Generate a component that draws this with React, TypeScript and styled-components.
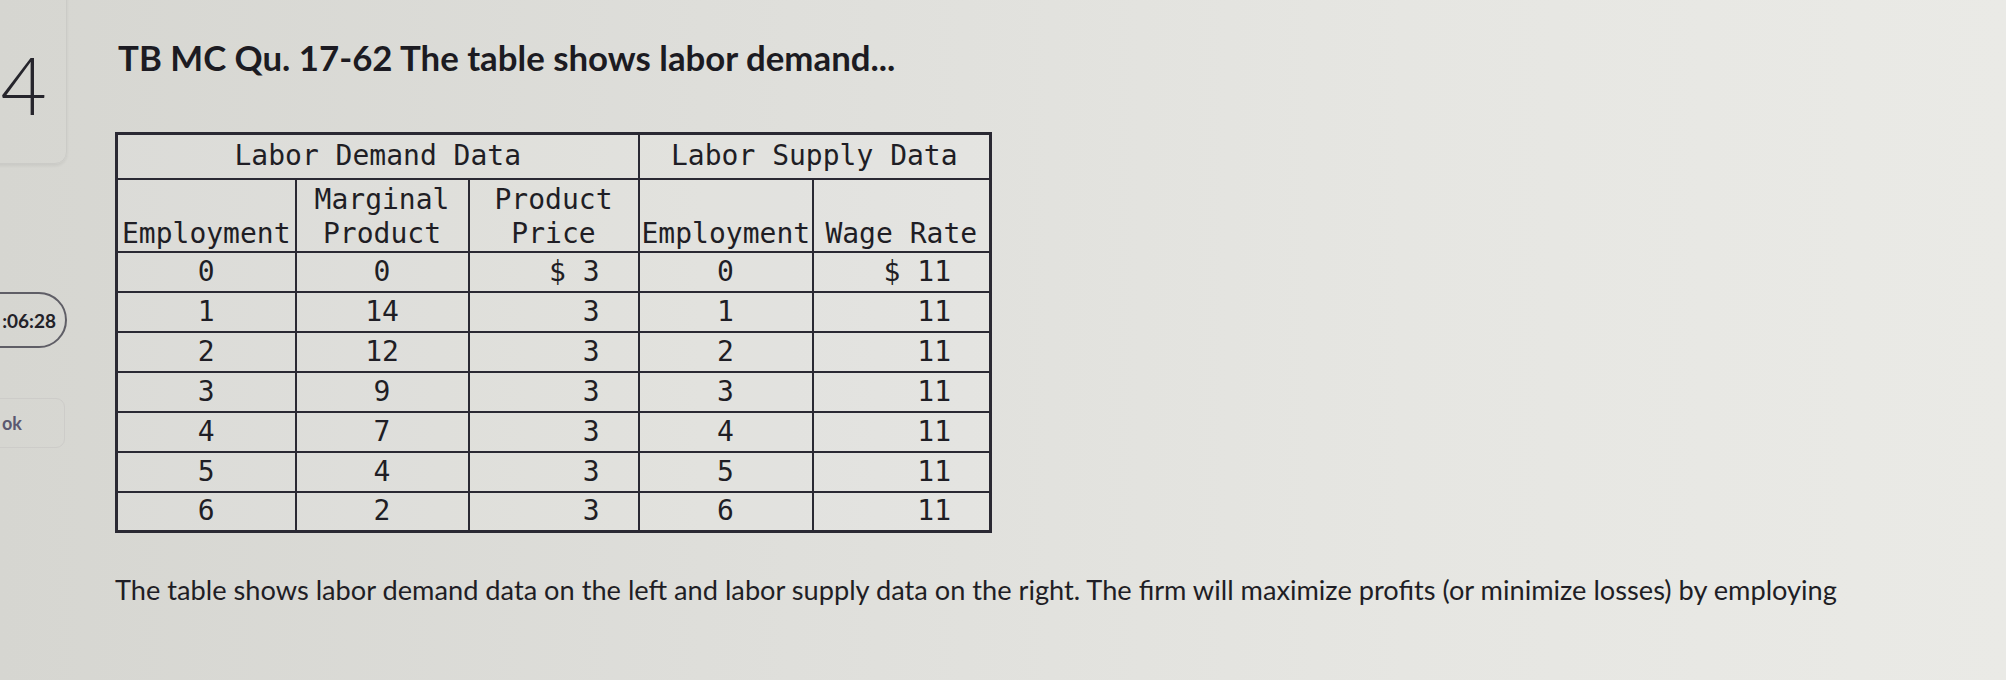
import React from "react";
import styled, { createGlobalStyle } from "styled-components";

const Global = createGlobalStyle`
  html, body { margin: 0; padding: 0; }
  body {
    width: 2006px;
    height: 680px;
    overflow: hidden;
    background: linear-gradient(90deg, #d6d6d1 0%, #dededa 35%, #e6e6e2 70%, #eaeae6 100%);
    font-family: Lato, "Open Sans", sans-serif;
    color: #1f1e25;
  }
`;

const Page = styled.div`
  display: flex;
  width: 2006px;
  height: 680px;
`;

const Rail = styled.div`
  width: 67px;
  flex: none;
  display: flex;
  flex-direction: column;
  align-items: flex-end;
`;

const NumberCard = styled.div`
  width: 110px;
  height: 184px;
  margin-top: -20px;
  box-sizing: border-box;
  border: 1.5px solid #cbcbc7;
  border-radius: 12px;
  box-shadow: 0 2px 3px rgba(0, 0, 0, 0.06);
  display: flex;
  justify-content: flex-end;
  padding: 72px 19px 0 0;
`;

const BigNumber = styled.div`
  font-family: Lato, sans-serif;
  font-weight: 300;
  font-size: 80px;
  line-height: 62px;
  color: #26252c;
`;

const TimerPill = styled.div`
  margin-top: 128px;
  width: 120px;
  height: 56px;
  box-sizing: border-box;
  border: 2px solid #5f5e66;
  border-radius: 28px;
  display: flex;
  align-items: center;
  justify-content: flex-end;
  padding-right: 9px;
  font-weight: 700;
  font-size: 19px;
  color: #222128;
`;

const BookBox = styled.div`
  margin-top: 50px;
  margin-right: 2px;
  width: 110px;
  height: 50px;
  box-sizing: border-box;
  border: 1.5px solid #cdccc9;
  border-radius: 9px;
  display: flex;
  align-items: center;
  justify-content: flex-end;
  padding-right: 42px;
  font-weight: 700;
  font-size: 18px;
  color: #5b5870;
`;

const Main = styled.div`
  flex: 1;
  padding-left: 48px;
  display: flex;
  flex-direction: column;
`;

const Title = styled.h1`
  margin: 37px 0 0 3px;
  font-family: Lato, sans-serif;
  font-weight: 700;
  font-size: 34.8px;
  line-height: 42px;
  color: #1c1b22;
`;

const DataTable = styled.table`
  margin-top: 53px;
  border-collapse: collapse;
  table-layout: fixed;
  width: 874px;
  font-family: "DejaVu Sans Mono", "Liberation Mono", monospace;
  font-size: 28px;
  color: #1f1e25;
  background: rgba(255, 255, 255, 0.12);
  border: 3px solid #2a2933;
`;

const Cell = styled.td<{ $align?: "left" | "center" | "right"; $h?: number; $valign?: string }>`
  border: 2.5px solid #2a2933;
  padding: ${(p) => (p.$align === "right" ? "0 38px 0 4px" : "0 2px")};
  text-align: ${(p) => p.$align || "center"};
  vertical-align: ${(p) => p.$valign || "middle"};
  height: ${(p) => p.$h || 40}px;
  line-height: 34px;
  white-space: nowrap;
  box-sizing: border-box;
  font-weight: 400;
`;

const Question = styled.p`
  margin: 40px 0 0 0;
  font-family: Lato, sans-serif;
  font-size: 27.2px;
  line-height: 34px;
  color: #1f1e25;
`;

const demand = [
  [0, 0, "$ 3"],
  [1, 14, 3],
  [2, 12, 3],
  [3, 9, 3],
  [4, 7, 3],
  [5, 4, 3],
  [6, 2, 3],
];
const supply = [
  [0, "$ 11"],
  [1, 11],
  [2, 11],
  [3, 11],
  [4, 11],
  [5, 11],
  [6, 11],
];

export default function App() {
  return (
    <>
      <Global />
      <Page>
        <Rail>
          <NumberCard>
            <BigNumber>4</BigNumber>
          </NumberCard>
          <TimerPill>:06:28</TimerPill>
          <BookBox>ok</BookBox>
        </Rail>
        <Main>
          <Title>TB MC Qu. 17-62 The table shows labor demand...</Title>
          <DataTable>
            <colgroup>
              <col style={{ width: 179 }} />
              <col style={{ width: 173 }} />
              <col style={{ width: 170 }} />
              <col style={{ width: 174 }} />
              <col style={{ width: 178 }} />
            </colgroup>
            <tbody>
              <tr>
                <Cell as="th" colSpan={3} $h={45}>
                  Labor Demand Data
                </Cell>
                <Cell as="th" colSpan={2} $h={45}>
                  Labor Supply Data
                </Cell>
              </tr>
              <tr>
                <Cell as="th" $h={73} $valign="bottom">Employment</Cell>
                <Cell as="th" $h={73} $valign="bottom">Marginal<br />Product</Cell>
                <Cell as="th" $h={73} $valign="bottom">Product<br />Price</Cell>
                <Cell as="th" $h={73} $valign="bottom">Employment</Cell>
                <Cell as="th" $h={73} $valign="bottom">Wage Rate</Cell>
              </tr>
              {demand.map((d, i) => (
                <tr key={i}>
                  <Cell>{d[0]}</Cell>
                  <Cell>{d[1]}</Cell>
                  <Cell $align="right">{d[2]}</Cell>
                  <Cell>{supply[i][0]}</Cell>
                  <Cell $align="right">{supply[i][1]}</Cell>
                </tr>
              ))}
            </tbody>
          </DataTable>
          <Question>
            The table shows labor demand data on the left and labor supply data on the right. The firm will maximize profits (or minimize losses) by employing
          </Question>
        </Main>
      </Page>
    </>
  );
}
